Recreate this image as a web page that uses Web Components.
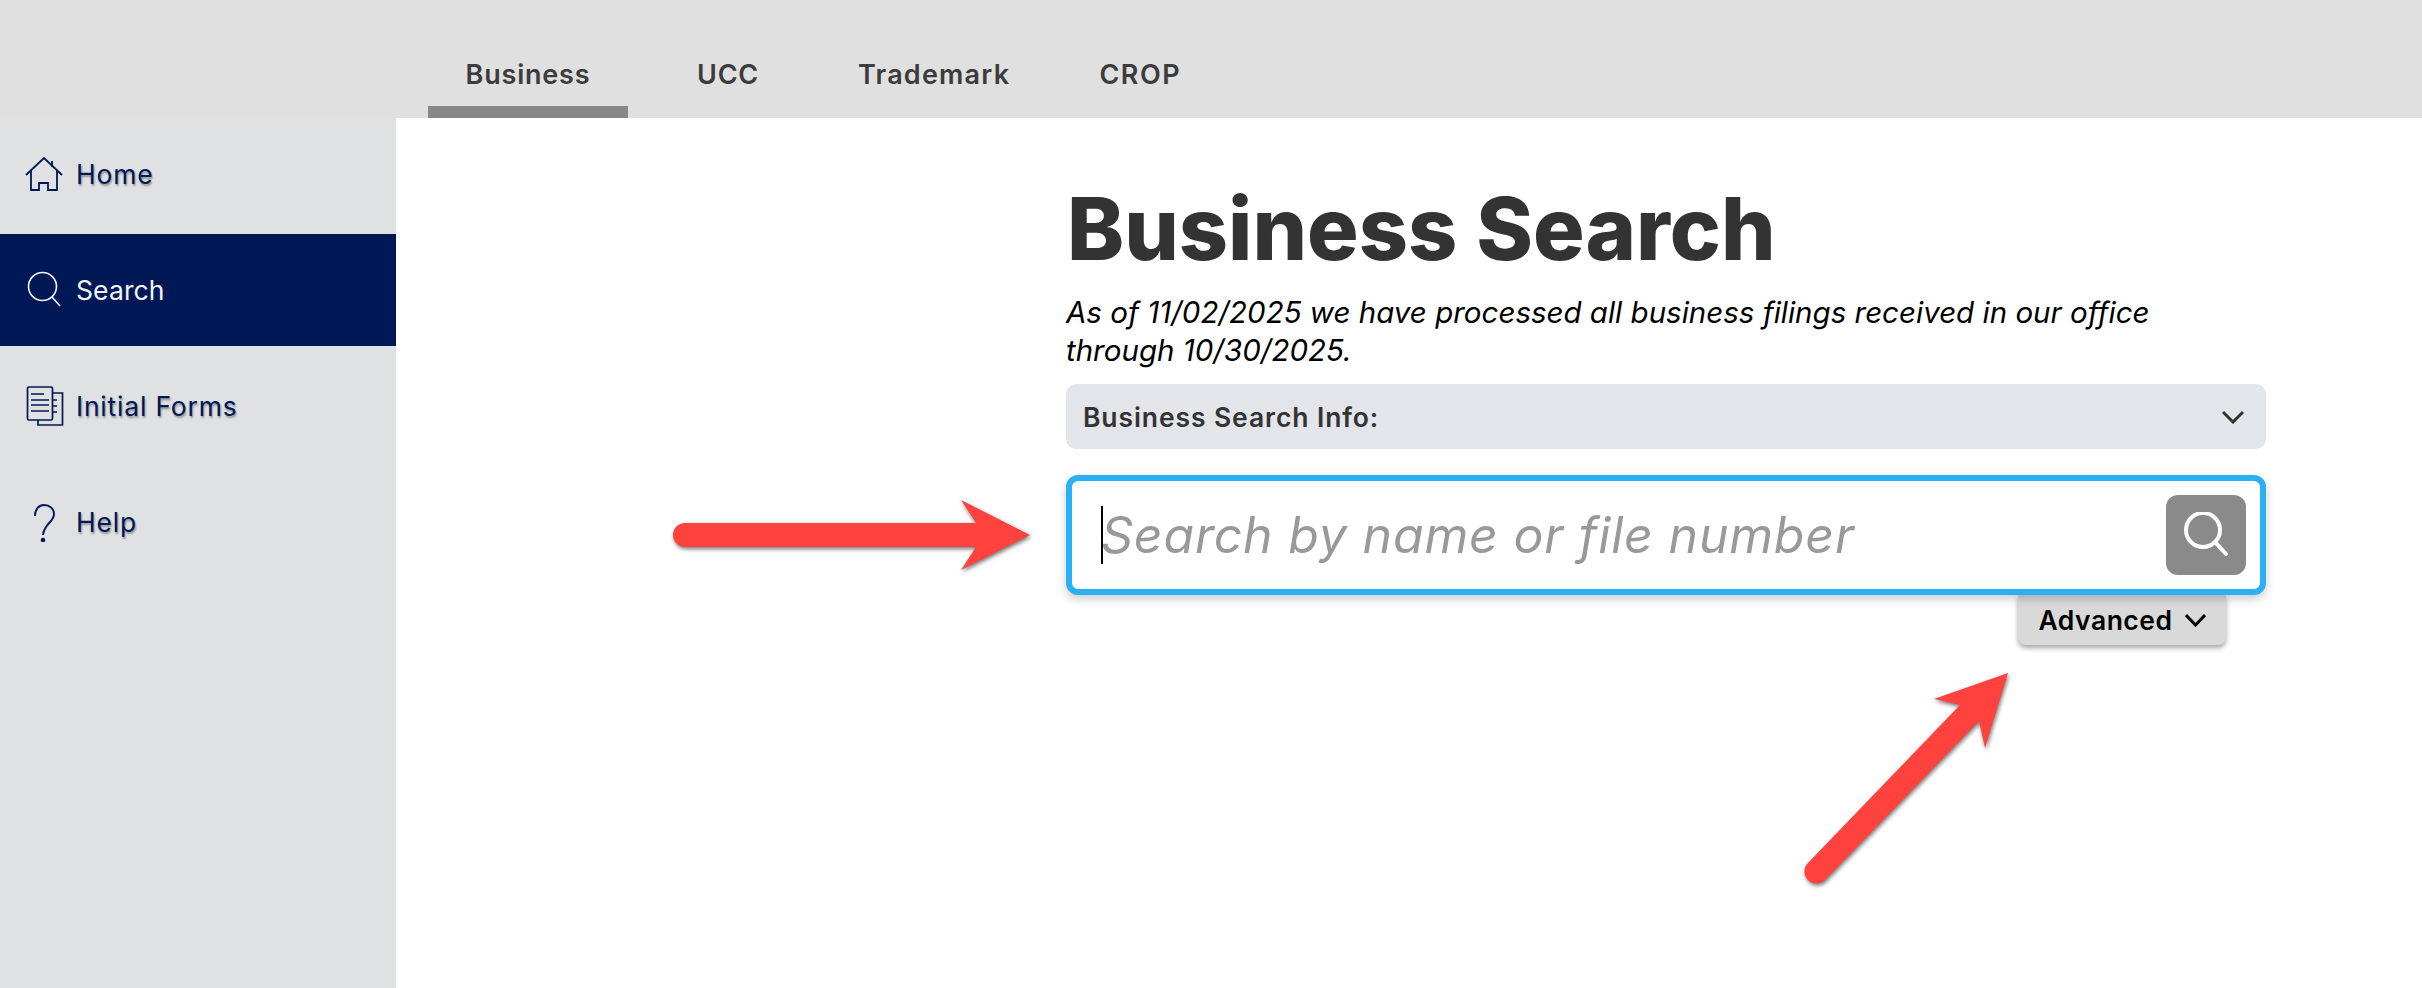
<!DOCTYPE html>
<html lang="en">
<head>
<meta charset="utf-8">
<title>Business Search</title>
<style>
  html, body { margin: 0; height: 100%; background: #fff; }
  body { font-family: Inter, "Liberation Sans", sans-serif; overflow: hidden; }
  svg { display: block; }
</style>
</head>
<body>
<app-shell>
  <top-tabs slot="tabs">
    <tab-item active>Business</tab-item>
    <tab-item>UCC</tab-item>
    <tab-item style="letter-spacing: 1.2px">Trademark</tab-item>
    <tab-item style="letter-spacing: 1.5px">CROP</tab-item>
  </top-tabs>
  <side-nav slot="nav">
    <nav-item label="Home">
      <svg slot="icon" width="40" height="40" viewBox="0 0 40 40" fill="none" stroke="currentColor" stroke-width="1.8"><path d="M2 21 20 4 38 21M7 17V36H15V29H24V36H33V17M28 7V13"/></svg>
    </nav-item>
    <nav-item label="Search" active>
      <svg slot="icon" width="40" height="40" viewBox="0 0 40 40" fill="none" stroke="currentColor" stroke-width="1.6"><circle cx="18.500" cy="16.500" r="14"/><path d="M28 27 36 36"/></svg>
    </nav-item>
    <nav-item label="Initial Forms">
      <svg slot="icon" width="40" height="40" viewBox="0 0 40 40" fill="none" stroke="currentColor" stroke-width="1.7"><rect x="3.5" y="1" width="25" height="33" rx="1.5"/><path d="M28.500 7H38.500V39H14V34M7 8H20M7 14H25M7 19H25M7 25H25M29 14H33M29 20H33M29 26H33"/></svg>
    </nav-item>
    <nav-item label="Help">
      <svg slot="icon" width="40" height="40" viewBox="0 0 40 40" fill="none" stroke="currentColor" stroke-width="2"><path d="M11 14C11 7 15 3 20 3 26 3 30 7 30 12 30 18 25 20 22 25 20 28 19 30 19 33"/><circle cx="19" cy="38" r="1.300"/></svg>
    </nav-item>
  </side-nav>
  <search-panel slot="main"></search-panel>
</app-shell>

<annotation-arrows></annotation-arrows>

<script>
class AppShell extends HTMLElement {
  constructor() {
    super();
    this.attachShadow({ mode: 'open' });
    this.shadowRoot.innerHTML = `
    <style>
      :host {
        display: grid;
        grid-template-columns: 396px 1fr;
        grid-template-rows: 118px 870px;
        width: 2422px;
        height: 988px;
      }
      .tabs { grid-column: 1 / -1; display: block; }
    </style>
    <div class="tabs"><slot name="tabs"></slot></div>
    <slot name="nav"></slot>
    <slot name="main"></slot>
    `;
  }
}
customElements.define('app-shell', AppShell);

class TopTabs extends HTMLElement {
  constructor() {
    super();
    this.attachShadow({ mode: 'open' });
    this.shadowRoot.innerHTML = `
    <style>
      :host {
        display: flex;
        height: 118px;
        padding-left: 428px;
        box-sizing: border-box;
        background-color: #e0e0e0;
      }
    </style>
    <slot></slot>
    `;
  }
}
customElements.define('top-tabs', TopTabs);

class TabItem extends HTMLElement {
  constructor() {
    super();
    this.attachShadow({ mode: 'open' });
    this.shadowRoot.innerHTML = `
    <style>
      :host {
        display: flex;
        justify-content: center;
        min-width: 200px;
        height: 118px;
        padding: 56px 30px 0;
        box-sizing: border-box;
        color: #3c3c3c;
        font: 600 27px/38px Inter, "Liberation Sans", sans-serif;
        letter-spacing: 0.8px;
      }
      :host([active]) {
        border-bottom: 12px solid #888;
      }
    </style>
    <slot></slot>
    `;
  }
}
customElements.define('tab-item', TabItem);

class SideNav extends HTMLElement {
  constructor() {
    super();
    this.attachShadow({ mode: 'open' });
    this.shadowRoot.innerHTML = `
    <style>
      :host {
        display: flex;
        flex-direction: column;
        gap: 4px;
        background-color: #e0e1e3;
      }
    </style>
    <slot></slot>
    `;
  }
}
customElements.define('side-nav', SideNav);

class NavItem extends HTMLElement {
  constructor() {
    super();
    this.attachShadow({ mode: 'open' });
    this.shadowRoot.innerHTML = `
    <style>
      :host {
        display: flex;
        align-items: center;
        gap: 12px;
        height: 112px;
        padding-left: 24px;
        color: #001856;
        font: 400 26.5px Inter, "Liberation Sans", sans-serif;
        letter-spacing: 0.8px;
      }
      :host([active]) {
        background-color: #001856;
        color: #f4f5f8;
        letter-spacing: 0.1px;
      }
      span { text-shadow: 1px 2px 2px rgba(0, 0, 0, 0.35); }
      :host([active]) span { text-shadow: none; }
    </style>
    <slot name="icon"></slot>
    <span></span>
    `;
    this.shadowRoot.querySelector('span').textContent = this.getAttribute('label');
  }
}
customElements.define('nav-item', NavItem);

class InfoBar extends HTMLElement {
  constructor() {
    super();
    this.attachShadow({ mode: 'open' });
    this.shadowRoot.innerHTML = `
    <style>
      :host {
        display: flex;
        align-items: center;
        justify-content: space-between;
        height: 65px;
        padding: 0 22px 0 17px;
        box-sizing: border-box;
        border-radius: 10px;
        background-color: #e4e5ea;
        color: #333;
        font: 600 26.5px Inter, "Liberation Sans", sans-serif;
        letter-spacing: 0.9px;
      }
    </style>
    <slot></slot>
    <svg width="22" height="14" viewBox="0 0 22 14" fill="none" stroke="#333" stroke-width="3"><path d="M1 2 11 12 21 2"/></svg>
    `;
  }
}
customElements.define('info-bar', InfoBar);

class SearchBox extends HTMLElement {
  constructor() {
    super();
    this.attachShadow({ mode: 'open' });
    this.shadowRoot.innerHTML = `
    <style>
      :host {
        display: flex;
        align-items: center;
        position: relative;
        z-index: 1;
        height: 120px;
        padding: 0 14px 0 29px;
        box-sizing: border-box;
        border: 6px solid #29b0f5;
        border-radius: 12px;
        background-color: #fff;
        box-shadow: 0 4px 10px rgba(0, 0, 0, 0.2);
      }
      .caret { width: 2px; height: 58px; background-color: #000; }
      .text {
        flex: 1;
        margin-left: -2px;
        color: #999;
        font: italic 400 50px Inter, "Liberation Sans", sans-serif;
        letter-spacing: 0.8px;
      }
      button {
        display: flex;
        align-items: center;
        justify-content: center;
        width: 80px;
        height: 80px;
        padding: 0;
        border: none;
        border-radius: 12px;
        background-color: #8a8a8a;
      }
    </style>
    <div class="caret"></div>
    <div class="text"><slot></slot></div>
    <button>
      <svg width="46" height="46" viewBox="0 0 46 46" fill="none" stroke="#fff" stroke-width="4" stroke-linecap="round"><circle cx="20" cy="18" r="17"/><path d="M32 30 43 42"/></svg>
    </button>
    `;
  }
}
customElements.define('search-box', SearchBox);

class AdvancedButton extends HTMLElement {
  constructor() {
    super();
    this.attachShadow({ mode: 'open' });
    this.shadowRoot.innerHTML = `
    <style>
      :host {
        display: flex;
        align-items: center;
        justify-content: center;
        gap: 12px;
        width: 208px;
        height: 50px;
        box-sizing: border-box;
        border-radius: 0 0 8px 8px;
        background-color: #d9d9d9;
        box-shadow: 0 3px 5px rgba(0, 0, 0, 0.35);
        color: #000;
        font: 600 26.5px Inter, "Liberation Sans", sans-serif;
        letter-spacing: 0.5px;
      }
    </style>
    <slot></slot>
    <svg width="21" height="14" viewBox="0 0 21 14" fill="none" stroke="#000" stroke-width="3"><path d="M1 2 10.500 12 20 2"/></svg>
    `;
  }
}
customElements.define('advanced-button', AdvancedButton);

class SearchPanel extends HTMLElement {
  constructor() {
    super();
    this.attachShadow({ mode: 'open' });
    this.shadowRoot.innerHTML = `
    <style>
      :host {
        display: flex;
        flex-direction: column;
        width: 1200px;
        margin-left: 670px;
        color: #000;
      }
      h1 {
        margin: 54px 0 0 1px;
        color: #333;
        font: 800 86px/114px Inter, "Liberation Sans", sans-serif;
      }
      p {
        max-width: 1120px;
        margin: 7px 0 0;
        font: italic 400 29.5px/38px Inter, "Liberation Sans", sans-serif;
      }
      info-bar { margin-top: 15px; }
      search-box { margin-top: 26px; }
      .actions { display: flex; justify-content: flex-end; padding-right: 40px; }
    </style>
    <h1>Business Search</h1>
    <p>As of 11/02/2025 we have processed all business filings received in our office through 10/30/2025.</p>
    <info-bar>Business Search Info:</info-bar>
    <search-box>Search by name or file number</search-box>
    <div class="actions"><advanced-button>Advanced</advanced-button></div>
    `;
  }
}
customElements.define('search-panel', SearchPanel);

class AnnotationArrows extends HTMLElement {
  constructor() {
    super();
    this.attachShadow({ mode: 'open' });
    this.shadowRoot.innerHTML = `
    <style>
      :host { position: absolute; left: 0; top: 0; z-index: 5; pointer-events: none; }
      svg { display: block; filter: drop-shadow(1px 2px 2px rgba(0, 0, 0, 0.55)); }
    </style>
    <svg width="2422" height="988" viewBox="0 0 2422 988" fill="#ff423d">
      <path d="M685 523H976L961 500 1030 535 961 570 976 547H685A12 12 0 0 1 685 523Z"/>
      <path d="M1808 863 1960 705 1934 699 2008 673 1985 748 1979 721 1825 880A12 12 0 0 1 1808 863Z"/>
    </svg>
    `;
  }
}
customElements.define('annotation-arrows', AnnotationArrows);
</script>
</body>
</html>
